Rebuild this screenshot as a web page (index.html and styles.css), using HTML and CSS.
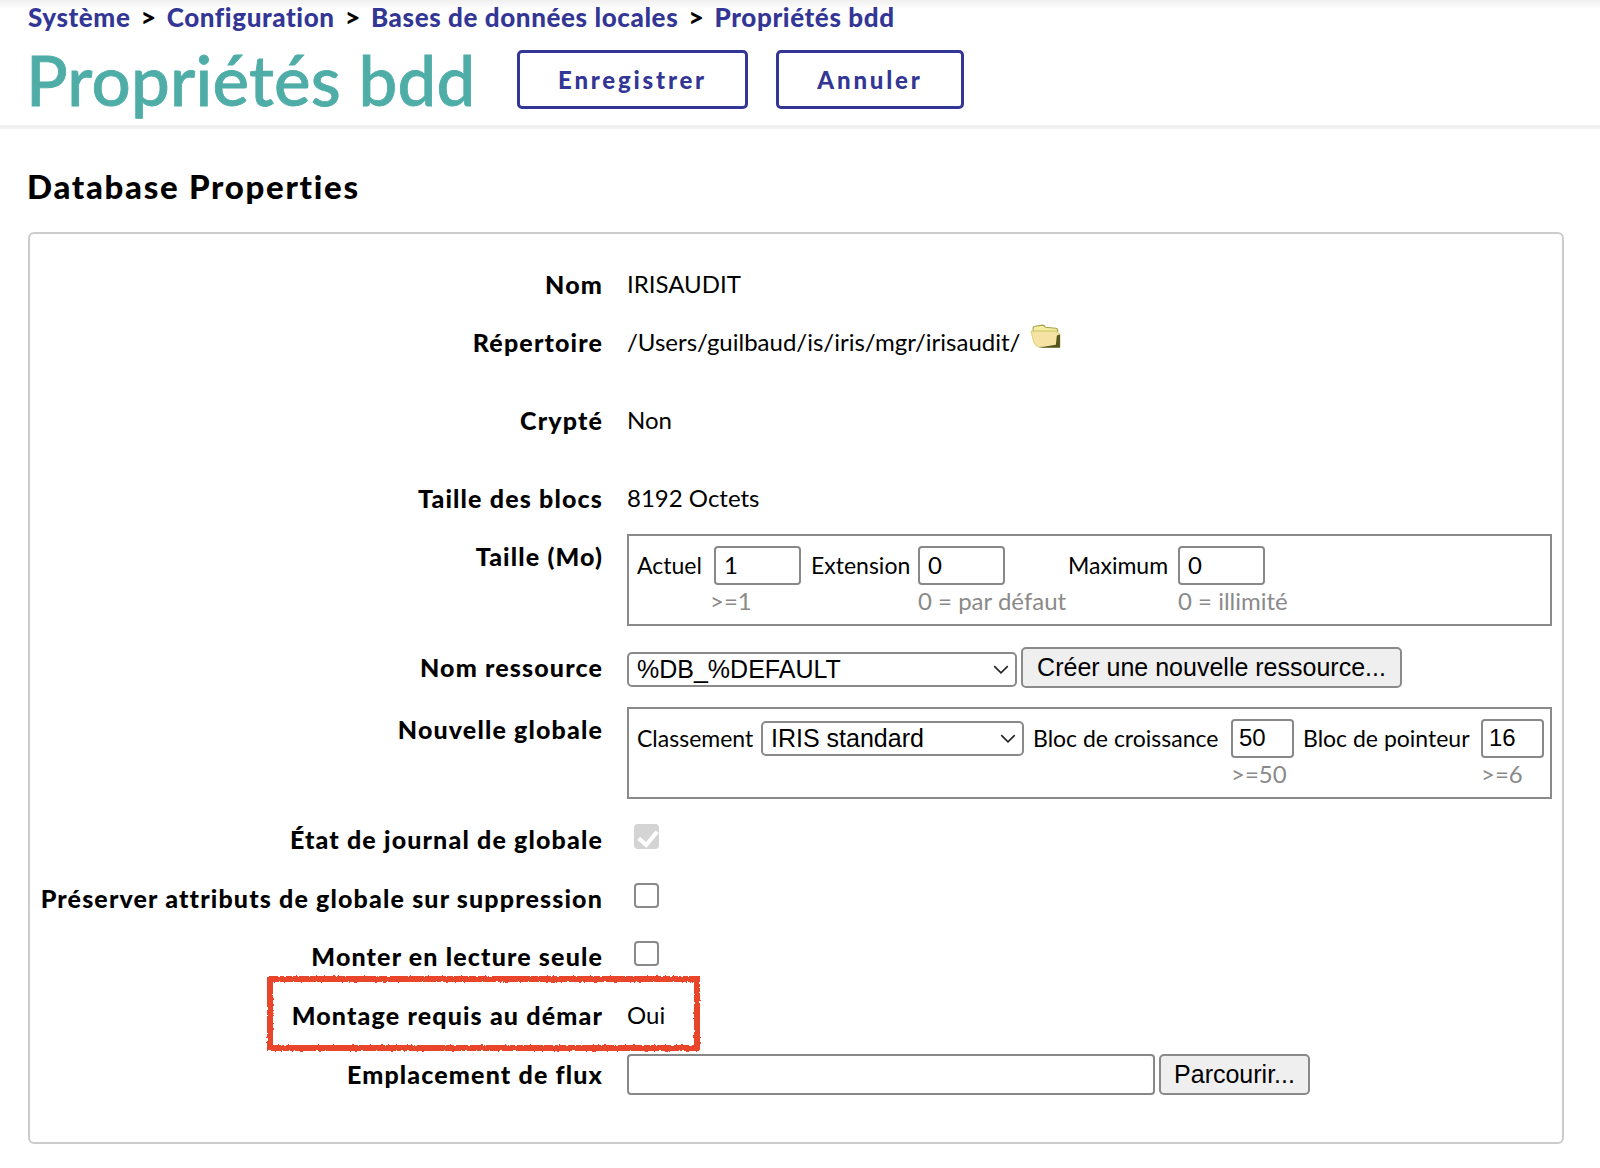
FILE: index.html
```html
<!DOCTYPE html>
<html lang="fr">
<head>
  <meta charset="UTF-8">
  <meta name="viewport" content="width=device-width, initial-scale=1.0">
  <title>Propriétés bdd</title>
  <link rel="stylesheet" href="styles.css">
</head>
<body>
  <header class="topbar">
    <nav class="crumbs">
      <a href="#">Système</a><span class="sep">&gt;</span>
      <a href="#">Configuration</a><span class="sep">&gt;</span>
      <a href="#">Bases de données locales</a><span class="sep">&gt;</span>
      <a href="#">Propriétés bdd</a>
    </nav>
    <div class="title-row">
      <h1>Propriétés bdd</h1>
      <button class="cmd cmd-save">Enregistrer</button>
      <button class="cmd cmd-cancel">Annuler</button>
    </div>
  </header>

  <main class="content">
    <h2>Database Properties</h2>
    <form class="card">
      <div class="row row-first">
        <label>Nom</label>
        <div class="value">IRISAUDIT</div>
      </div>
      <div class="row row-tall">
        <label>Répertoire</label>
        <div class="value">/Users/guilbaud/is/iris/mgr/irisaudit/
          <svg class="folder" viewBox="0 0 30 24" width="31" height="25">
            <path d="M3 7 L3 4 Q3 2 5 2 L12 1 Q14 1 15 3 L25 4 Q27 4 27 7 Z" fill="#f4eda0" stroke="#a8a24c" stroke-width="1"/>
            <path d="M1 7 L25 7 L29 10 L29 22 L8 22 Q4 20 3 15 Z" fill="#f6e3a4" stroke="#d8d27a" stroke-width="1"/>
            <path d="M29 10 L29 23 L8 23 L25 20 L26 11 Z" fill="#55541c"/>
          </svg>
        </div>
      </div>
      <div class="row row-tall">
        <label>Crypté</label>
        <div class="value">Non</div>
      </div>
      <div class="row row-blocks">
        <label>Taille des blocs</label>
        <div class="value">8192 Octets</div>
      </div>
      <div class="row row-box">
        <label>Taille (Mo)</label>
        <fieldset class="box box-size">
          <span class="box-label">Actuel</span>
          <input class="num" type="text" value="1">
          <span class="box-label">Extension</span>
          <input class="num" type="text" value="0">
          <span class="box-label">Maximum</span>
          <input class="num" type="text" value="0">
          <span></span><span class="hint hint-shift">&gt;=1</span>
          <span></span><span class="hint">0 = par défaut</span>
          <span></span><span class="hint">0 = illimité</span>
        </fieldset>
      </div>
      <div class="row row-resource">
        <label>Nom ressource</label>
        <div class="controls">
          <div class="select-wrap select-resource">
            <select><option>%DB_%DEFAULT</option></select>
            <svg class="chevron" viewBox="0 0 14 8" width="16" height="9"><path d="M1 1 L7 7 L13 1" fill="none" stroke="#222" stroke-width="1.4"/></svg>
          </div>
          <button type="button" class="native-btn btn-resource">Créer une nouvelle ressource...</button>
        </div>
      </div>
      <div class="row row-global">
        <label>Nouvelle globale</label>
        <fieldset class="box box-global">
          <span class="box-label">Classement</span>
          <div class="select-wrap select-collation">
            <select><option>IRIS standard</option></select>
            <svg class="chevron" viewBox="0 0 14 8" width="16" height="9"><path d="M1 1 L7 7 L13 1" fill="none" stroke="#222" stroke-width="1.4"/></svg>
          </div>
          <span class="box-label">Bloc de croissance</span>
          <input class="num num-small" type="text" value="50">
          <span class="box-label">Bloc de pointeur</span>
          <input class="num num-small" type="text" value="16">
          <span></span><span></span>
          <span></span><span class="hint">&gt;=50</span>
          <span></span><span class="hint">&gt;=6</span>
        </fieldset>
      </div>
      <div class="row">
        <label>État de journal de globale</label>
        <div class="value"><input class="check" type="checkbox" checked disabled></div>
      </div>
      <div class="row">
        <label>Préserver attributs de globale sur suppression</label>
        <div class="value"><input class="check" type="checkbox"></div>
      </div>
      <div class="row">
        <label>Monter en lecture seule</label>
        <div class="value"><input class="check" type="checkbox"></div>
      </div>
      <div class="row row-marked">
        <label>Montage requis au démar</label>
        <div class="value">Oui</div>
        <div class="marker"></div>
      </div>
      <div class="row">
        <label>Emplacement de flux</label>
        <div class="controls controls-stream">
          <input class="stream" type="text">
          <button type="button" class="native-btn btn-browse">Parcourir...</button>
        </div>
      </div>
    </form>
  </main>

  <svg class="defs" width="0" height="0">
    <filter id="rough"><feTurbulence type="fractalNoise" baseFrequency="0.35" numOctaves="2" seed="4"/><feDisplacementMap in="SourceGraphic" scale="3"/></filter>
  </svg>
</body>
</html>
```

FILE: styles.css
```css
* {
  box-sizing: border-box;
}

body {
  margin: 0;
  background: #fff;
  color: #000;
  font-family: Lato, "Open Sans", sans-serif;
}

/* header */
.topbar {
  height: 129px;
  padding: 0 28px;
  border-bottom: 4px solid #f1f1f1;
  background: linear-gradient(#efefef, #fff 9px);
}

.crumbs {
  display: flex;
  align-items: baseline;
  height: 36px;
  padding-top: 2px;
  font-size: 26px;
  font-weight: 900;
  line-height: 30px;
  letter-spacing: 0.6px;
}

.crumbs a {
  color: #333695;
  text-decoration: none;
}

.sep {
  margin: 0 10px;
  color: #000;
  font-size: 27px;
  font-weight: 900;
}

.title-row {
  display: flex;
  align-items: center;
  margin-top: 14px;
}

h1 {
  width: 491px;
  margin: 0 0 0 -2px;
  color: #4fada8;
  font-size: 69px;
  font-weight: 500;
  line-height: 59px;
  letter-spacing: 0.2px;
  -webkit-text-stroke: 0.8px #4fada8;
}

.cmd {
  height: 59px;
  margin-right: 28px;
  border: 3px solid #333695;
  border-radius: 5px;
  background: #fff;
  color: #333695;
  font-family: inherit;
  font-size: 24px;
  font-weight: 900;
  letter-spacing: 2.8px;
}

.cmd-save {
  width: 231px;
}

.cmd-cancel {
  width: 188px;
}

/* content */
.content {
  padding: 0 36px 0 28px;
}

h2 {
  height: 103px;
  margin: 0 0 0 -1px;
  padding-top: 37px;
  font-size: 33px;
  font-weight: 900;
  line-height: 40px;
  letter-spacing: 1.7px;
}

.card {
  height: 912px;
  margin: 0;
  padding: 21px 10px 0 10px;
  border: 2px solid #ccc;
  border-radius: 6px;
}

.row {
  position: relative;
  display: flex;
  align-items: flex-start;
  gap: 25px;
  min-height: 58.7px;
  padding-top: 14px;
  font-size: 24px;
  line-height: 30px;
}

.row-first {
  min-height: 58px;
}

.row-tall {
  min-height: 78px;
}

.row-blocks {
  min-height: 58px;
}

.row-box {
  min-height: 111px;
}

.row-resource {
  min-height: 62px;
}

.row-global {
  min-height: 110px;
}

.row label {
  flex: none;
  width: 563px;
  margin-right: -1px;
  font-size: 25px;
  font-weight: 900;
  letter-spacing: 1.15px;
  text-align: right;
}

.value {
  font-weight: 400;
}

.folder {
  position: relative;
  top: -8px;
  margin-left: 3px;
  vertical-align: middle;
}

/* bordered groups */
.box {
  display: grid;
  align-items: center;
  align-content: start;
  width: 926px;
  margin: -7px 0 0;
  padding: 10px 8px 0;
  border: 2px solid #8a8a8a;
  min-width: 0;
}

.box-size {
  height: 92px;
  grid-template-columns: 77px 97px 107px 150px 110px auto;
}

.box-global {
  height: 92px;
  padding-top: 10px;
  grid-template-columns: 124px 272px 198px 72px 178px auto;
}

.box-label {
  margin-top: -2px;
  font-size: 23px;
  white-space: nowrap;
}

.num {
  width: 87px;
  height: 39px;
  padding: 0 8px 2px;
  border: 2px solid #888;
  border-radius: 4px;
  font-family: Lato, sans-serif;
  font-size: 24px;
}

.num-small {
  width: 63px;
  padding: 0 6px 2px;
  font-family: "Liberation Sans", sans-serif;
}

.hint {
  color: #8a8a8a;
  font-size: 24px;
  line-height: 32px;
  white-space: nowrap;
}

.hint-shift {
  margin-left: -4px;
}

/* native looking controls */
.controls {
  display: flex;
  align-items: flex-start;
  gap: 4px;
  margin-top: -5px;
}

.select-wrap {
  position: relative;
}

.select-wrap select {
  display: block;
  width: 100%;
  height: 35px;
  padding: 0 8px 2px;
  border: 2px solid #8a8a8a;
  border-radius: 5px;
  background: #fff;
  color: #000;
  font-family: "Liberation Sans", sans-serif;
  font-size: 25px;
  appearance: none;
}

.select-resource {
  width: 390px;
  margin-top: 5px;
}

.select-collation {
  width: 263px;
}

.chevron {
  position: absolute;
  top: 13px;
  right: 8px;
}

.native-btn {
  height: 41px;
  padding: 0;
  border: 2px solid #8a8a8a;
  border-radius: 5px;
  background: #efefef;
  color: #000;
  font-family: "Liberation Sans", sans-serif;
  font-size: 25px;
}

.btn-resource {
  width: 381px;
}

.btn-browse {
  width: 151px;
}

.stream {
  width: 528px;
  height: 41px;
  border: 2px solid #888;
  border-radius: 4px;
}

/* checkboxes */
.check {
  position: relative;
  display: block;
  width: 25px;
  height: 25px;
  margin: 0 0 0 7px;
  border: 2px solid #8a8a8a;
  border-radius: 4px;
  background: #fff;
  appearance: none;
}

.check:checked {
  border-color: #d4d4d4;
  background: #d4d4d4;
}

.check:checked::after {
  content: "";
  position: absolute;
  left: 6px;
  top: 1px;
  width: 8px;
  height: 15px;
  border: solid #fff;
  border-width: 0 4px 4px 0;
  transform: rotate(40deg);
}

/* red annotation */
.marker {
  position: absolute;
  left: 227px;
  top: -10px;
  width: 433px;
  height: 75px;
  border: 6px solid #e8452a;
  filter: url(#rough);
}

.defs {
  position: absolute;
}
```
